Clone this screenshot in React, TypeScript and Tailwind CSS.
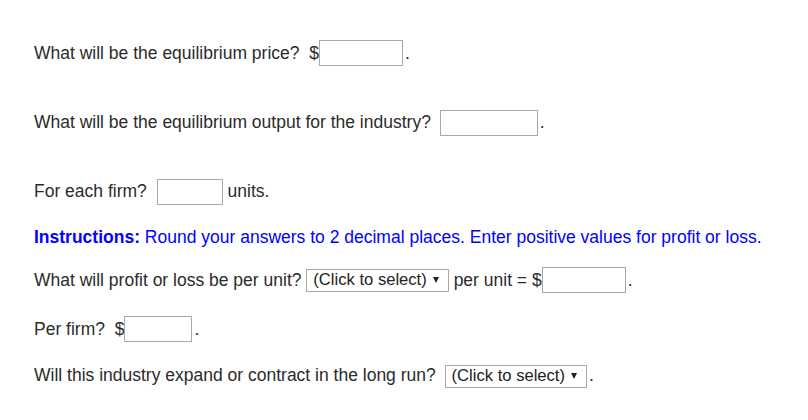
import React from "react";

const Input = ({ w }: { w: string }) => (
  <span className={`inline-block ${w} h-[26px] border border-[#a9a9a9] bg-white align-middle`} />
);

const Select = () => (
  <span className="inline-flex items-center h-[23px] border border-[#a9a9a9] bg-white align-middle pl-[6px] pr-[9px] text-[16.6px] text-[#222]">
    <span>(Click to select)</span>
    <span className="ml-[6px] w-0 h-0 border-l-[3px] border-r-[3px] border-t-[6px] border-l-transparent border-r-transparent border-t-[#222]" />
  </span>
);

export default function App() {
  return (
    <div
      className="w-[808px] h-[420px] bg-white text-[#2b2b2b] text-[17.5px] leading-[26px] pl-[34px]"
      style={{ fontFamily: '"Liberation Sans", Arial, sans-serif' }}
    >
      <div className="pt-[40px] h-[66px] flex items-center whitespace-pre">
        <span>What will be the equilibrium price?  $</span>
        <Input w="w-[84px]" />
        <span className="ml-[2px]">.</span>
      </div>
      <div className="mt-[43px] h-[26px] flex items-center whitespace-pre">
        <span>What will be the equilibrium output for the industry? </span>
        <span className="ml-[4px]"><Input w="w-[98px]" /></span>
        <span className="ml-[2px]">.</span>
      </div>
      <div className="mt-[43px] h-[26px] flex items-center whitespace-pre">
        <span>For each firm? </span>
        <span className="ml-[5px]"><Input w="w-[66px]" /></span>
        <span> units.</span>
      </div>
      <div className="mt-[20px] h-[26px] flex items-center text-[#0000ff]">
        <span><b>Instructions:</b> Round your answers to 2 decimal places. Enter positive values for profit or loss.</span>
      </div>
      <div className="mt-[17px] h-[26px] flex items-center whitespace-pre">
        <span>What will profit or loss be per unit? </span>
        <Select />
        <span> per unit = $</span>
        <Input w="w-[84px]" />
        <span className="ml-[2px]">.</span>
      </div>
      <div className="mt-[23px] h-[26px] flex items-center whitespace-pre">
        <span>Per firm?  $</span>
        <Input w="w-[68px]" />
        <span className="ml-[2px]">.</span>
      </div>
      <div className="mt-[20px] h-[26px] flex items-center whitespace-pre">
        <span>Will this industry expand or contract in the long run? </span>
        <span className="ml-[4px]"><Select /></span>
        <span className="ml-[2px]">.</span>
      </div>
    </div>
  );
}
